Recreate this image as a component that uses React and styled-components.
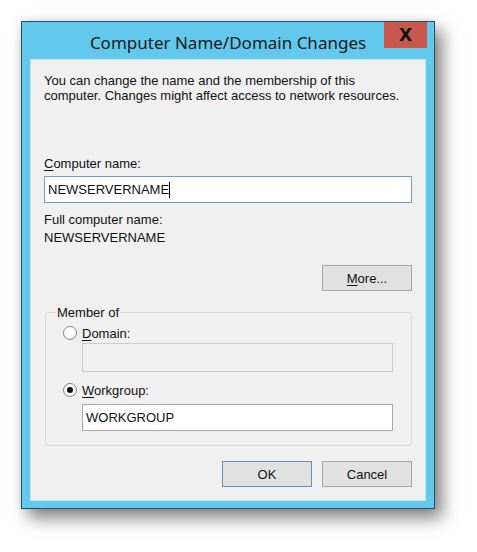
import React from "react";
import styled, { createGlobalStyle } from "styled-components";

const GlobalStyle = createGlobalStyle`
  html, body {
    margin: 0;
    padding: 0;
    background: #ffffff;
  }
  body {
    font-family: "Liberation Sans", Arial, sans-serif;
    color: #111;
  }
`;

const Page = styled.div`
  width: 477px;
  height: 552px;
  padding: 21px 0 0 21px;
  box-sizing: border-box;
`;

const Window = styled.div`
  width: 414px;
  height: 488px;
  box-sizing: border-box;
  display: flex;
  flex-direction: column;
  background: #62c8ec;
  border: 1px solid #2c4d60;
  padding: 0 8px 7px 8px;
  box-shadow: 7px 9px 16px rgba(0, 0, 0, 0.5), -1px -1px 6px rgba(0, 0, 0, 0.08);
`;

const TitleBar = styled.div`
  height: 37px;
  display: grid;
  grid-template-columns: 1fr auto 1fr;
  align-items: start;
  margin: 0 -8px;
`;

const Title = styled.div`
  grid-column: 2;
  padding-top: 9px;
  font-family: "Noto Sans", "Open Sans", sans-serif;
  font-size: 17px;
  color: #1a1a1a;
  white-space: nowrap;
`;

const CloseButton = styled.div`
  grid-column: 3;
  justify-self: end;
  margin-right: 7px;
  width: 43px;
  height: 26px;
  background: #c8574d;
  display: flex;
  align-items: center;
  justify-content: center;
  font-family: "DejaVu Sans", "Liberation Sans", sans-serif;
  font-weight: bold;
  font-size: 17px;
  color: #111;
`;

const Client = styled.div`
  flex: 1;
  background: #f0f0f0;
  border: 1px solid #bfe3f1;
  padding: 13px 13px 0 13px;
  display: flex;
  flex-direction: column;
  font-size: 13px;
`;

const Intro = styled.p`
  margin: 0;
  line-height: 15px;
`;

const Label = styled.div`
  margin-top: ${(p) => p.$top || 0}px;
  line-height: 18px;
`;

const Key = styled.span`
  text-decoration: underline;
  text-underline-offset: 2px;
`;

const TextBox = styled.div`
  height: ${(p) => p.$h || 27}px;
  margin-top: ${(p) => p.$top || 0}px;
  box-sizing: border-box;
  border: 1px solid ${(p) => (p.$focused ? "#6f9bc6" : p.$disabled ? "#cccccc" : "#a6a8ad")};
  background: ${(p) => (p.$disabled ? "#f0f0f0" : "#ffffff")};
  padding: 0 3px;
  display: flex;
  align-items: center;
  font-size: 13px;
`;

const Caret = styled.span`
  display: inline-block;
  width: 1px;
  height: 16px;
  background: #000;
`;

const ButtonRow = styled.div`
  display: flex;
  justify-content: flex-end;
  gap: 10px;
  margin-top: ${(p) => p.$top || 0}px;
`;

const Button = styled.div`
  width: 90px;
  height: 26px;
  box-sizing: border-box;
  background: #e1e1e1;
  border: 1px solid ${(p) => (p.$default ? "#5f93c4" : "#a5a5a5")};
  display: flex;
  align-items: center;
  justify-content: center;
  font-size: 13px;
`;

const Group = styled.fieldset`
  margin: 14px 0 0 1px;
  padding: 3px 18px 14px 10px;
  border: 1px solid #dadada;
  border-radius: 3px;
  min-width: 0;
`;

const Legend = styled.legend`
  padding: 0 1px;
  line-height: 15px;
`;

const RadioRow = styled.div`
  display: flex;
  align-items: center;
  gap: 5px;
  height: 20px;
  padding-left: 7px;
  margin-top: ${(p) => p.$top || 0}px;
`;

const Radio = styled.span`
  width: 14px;
  height: 14px;
  box-sizing: border-box;
  border-radius: 50%;
  border: 1px solid #858585;
  background: radial-gradient(circle at 50% 40%, #ffffff 45%, #e6e6e6 100%);
  display: flex;
  align-items: center;
  justify-content: center;

  &::after {
    content: "";
    width: 6px;
    height: 6px;
    border-radius: 50%;
    background: ${(p) => (p.$checked ? "#111" : "transparent")};
  }
`;

const Indented = styled.div`
  padding-left: 26px;
`;

export default function App() {
  return (
    <>
      <GlobalStyle />
      <Page>
        <Window>
          <TitleBar>
            <Title>Computer Name/Domain Changes</Title>
            <CloseButton>X</CloseButton>
          </TitleBar>
          <Client>
            <Intro>
              You can change the name and the membership of this
              <br />
              computer. Changes might affect access to network resources.
            </Intro>

            <Label $top={52}>
              <Key>C</Key>omputer name:
            </Label>
            <TextBox $focused $top={3}>
              NEWSERVERNAME
              <Caret />
            </TextBox>

            <Label $top={8}>Full computer name:</Label>
            <Label>NEWSERVERNAME</Label>

            <ButtonRow $top={18}>
              <Button>
                <span>
                  <Key>M</Key>ore...
                </span>
              </Button>
            </ButtonRow>

            <Group>
              <Legend>Member of</Legend>
              <RadioRow>
                <Radio />
                <span>
                  <Key>D</Key>omain:
                </span>
              </RadioRow>
              <Indented>
                <TextBox $disabled $h={29} />
              </Indented>
              <RadioRow $top={8}>
                <Radio $checked />
                <span>
                  <Key>W</Key>orkgroup:
                </span>
              </RadioRow>
              <Indented>
                <TextBox $top={4}>WORKGROUP</TextBox>
              </Indented>
            </Group>

            <ButtonRow $top={15}>
              <Button $default>OK</Button>
              <Button>Cancel</Button>
            </ButtonRow>
          </Client>
        </Window>
      </Page>
    </>
  );
}
